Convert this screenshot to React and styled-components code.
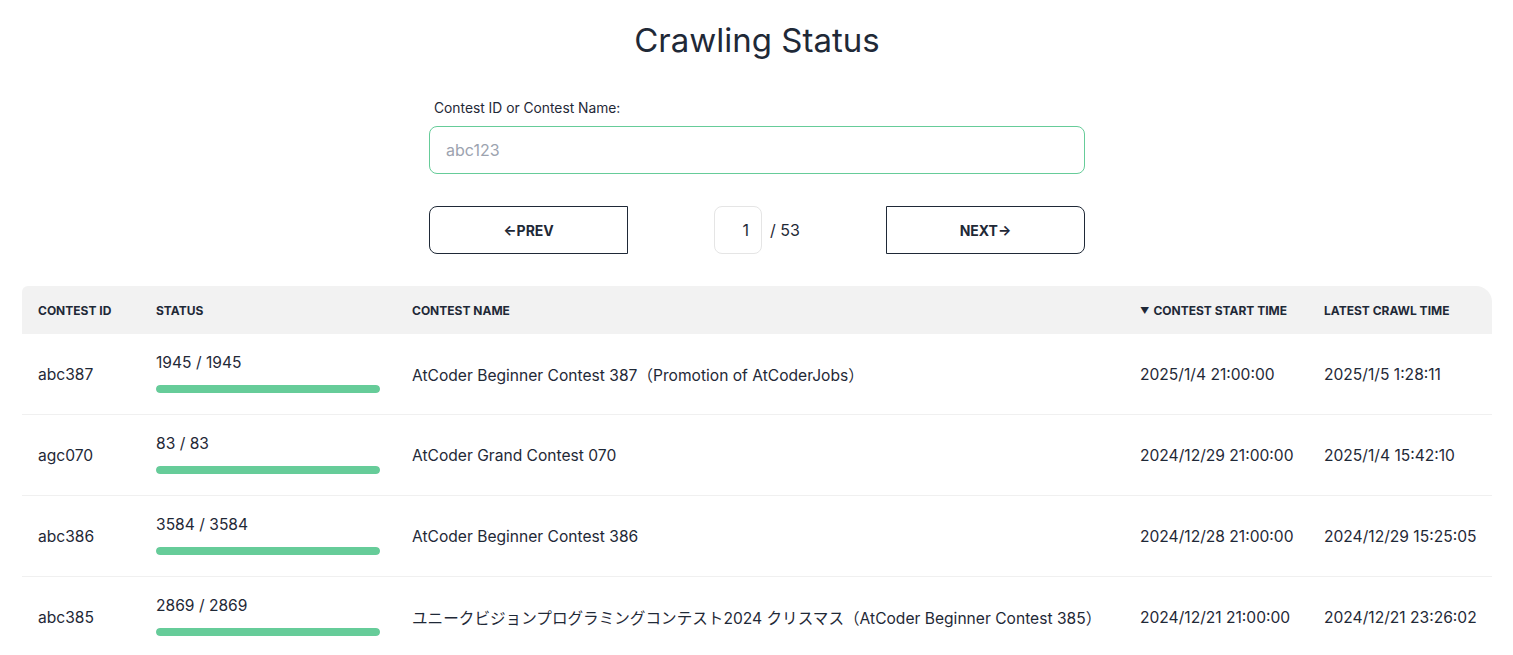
import React, { useState } from "react";
import styled, { createGlobalStyle } from "styled-components";

const GlobalStyle = createGlobalStyle`
  * { box-sizing: border-box; }
  body {
    margin: 0;
    background: #ffffff;
    color: #1f2937;
    font-family: Inter, "Noto Sans CJK JP", sans-serif;
  }
`;

const Page = styled.div`
  display: flex;
  flex-direction: column;
  align-items: center;
  padding: 20px 21px 0 22px;
`;

const Title = styled.h1`
  margin: 0;
  font-size: 33px;
  line-height: 40px;
  font-weight: 400;
  color: #1f2937;
`;

const Controls = styled.div`
  width: 656px;
  display: flex;
  flex-direction: column;
  margin-top: 38px;
`;

const Label = styled.label`
  font-size: 13.8px;
  line-height: 20px;
  padding: 0 5px;
  margin-bottom: 8px;
`;

const SearchInput = styled.input`
  height: 48px;
  border: 1px solid #66cc99;
  border-radius: 8px;
  padding: 0 16px;
  font-family: inherit;
  font-size: 16px;
  color: #1f2937;
  outline: none;
  &::placeholder { color: #9ca3af; }
`;

const Pager = styled.div`
  display: grid;
  grid-template-columns: 199px 1fr 199px;
  align-items: center;
  margin-top: 32px;
`;

const NavButton = styled.button`
  height: 48px;
  background: #fff;
  border: 1px solid #1f2937;
  border-radius: ${(p) => (p.$side === "left" ? "8px 0 0 8px" : "0 8px 8px 0")};
  font-family: inherit;
  font-size: 14px;
  font-weight: 700;
  color: #1f2937;
  cursor: pointer;
`;

const PageBox = styled.div`
  display: flex;
  align-items: center;
  justify-content: center;
  gap: 8px;
  font-size: 16px;
`;

const PageInput = styled.input`
  width: 48px;
  height: 48px;
  border: 1px solid #e5e5e5;
  border-radius: 8px;
  text-align: right;
  padding: 0 12px;
  font-family: inherit;
  font-size: 16px;
  color: #1f2937;
  outline: none;
`;

const Table = styled.table`
  width: 100%;
  margin-top: 32px;
  table-layout: fixed;
  border-collapse: separate;
  border-spacing: 0;
  font-size: 15.6px;
`;

const Th = styled.th`
  background: #f2f2f2;
  height: 48px;
  padding: 0 16px;
  text-align: left;
  font-size: 12px;
  font-weight: 700;
  text-transform: uppercase;
  white-space: nowrap;
  color: #1f2937;
  width: ${(p) => p.$w || "auto"};
  &:first-child { border-top-left-radius: 6px; }
  &:last-child { border-top-right-radius: 16px; }
`;

const SortMark = styled.span`
  font-size: 9px;
  margin-right: 4px;
  vertical-align: 1px;
`;

const Td = styled.td`
  height: 81px;
  padding: 0 16px;
  border-bottom: 1px solid #f0f0f0;
  vertical-align: middle;
  white-space: nowrap;
`;

const Status = styled.div`
  display: flex;
  flex-direction: column;
  gap: 10px;
  padding-bottom: 5px;
  line-height: 24px;
`;

const Bar = styled.div`
  width: 224px;
  height: 8px;
  border-radius: 4px;
  background: #e5e7eb;
  overflow: hidden;
`;

const Fill = styled.div`
  height: 100%;
  background: #66cc99;
  border-radius: 4px;
`;

const rows = [
  { id: "abc387", done: 1945, total: 1945, name: "AtCoder Beginner Contest 387（Promotion of AtCoderJobs）", start: "2025/1/4 21:00:00", crawl: "2025/1/5 1:28:11" },
  { id: "agc070", done: 83, total: 83, name: "AtCoder Grand Contest 070", start: "2024/12/29 21:00:00", crawl: "2025/1/4 15:42:10" },
  { id: "abc386", done: 3584, total: 3584, name: "AtCoder Beginner Contest 386", start: "2024/12/28 21:00:00", crawl: "2024/12/29 15:25:05" },
  { id: "abc385", done: 2869, total: 2869, name: "ユニークビジョンプログラミングコンテスト2024 クリスマス（AtCoder Beginner Contest 385）", start: "2024/12/21 21:00:00", crawl: "2024/12/21 23:26:02" },
];

export default function App() {
  const [query, setQuery] = useState("");
  const [page, setPage] = useState(1);

  return (
    <Page>
      <GlobalStyle />
      <Title>Crawling Status</Title>
      <Controls>
        <Label>Contest ID or Contest Name:</Label>
        <SearchInput
          type="text"
          placeholder="abc123"
          value={query}
          onChange={(e) => setQuery(e.target.value)}
        />
        <Pager>
          <NavButton $side="left" onClick={() => setPage(Math.max(1, page - 1))}>←PREV</NavButton>
          <PageBox>
            <PageInput value={page} onChange={(e) => setPage(e.target.value)} />
            <span>/ 53</span>
          </PageBox>
          <NavButton $side="right" onClick={() => setPage(Math.min(53, Number(page) + 1))}>NEXT→</NavButton>
        </Pager>
      </Controls>
      <Table>
        <thead>
          <tr>
            <Th $w="118px">Contest ID</Th>
            <Th $w="256px">Status</Th>
            <Th>Contest Name</Th>
            <Th $w="184px"><SortMark>▼</SortMark>Contest Start Time</Th>
            <Th $w="184px">Latest Crawl Time</Th>
          </tr>
        </thead>
        <tbody>
          {rows.map((r) => (
            <tr key={r.id}>
              <Td>{r.id}</Td>
              <Td>
                <Status>
                  <span>{r.done} / {r.total}</span>
                  <Bar>
                    <Fill style={{ width: `${(r.done / r.total) * 100}%` }} />
                  </Bar>
                </Status>
              </Td>
              <Td>{r.name}</Td>
              <Td>{r.start}</Td>
              <Td>{r.crawl}</Td>
            </tr>
          ))}
        </tbody>
      </Table>
    </Page>
  );
}
